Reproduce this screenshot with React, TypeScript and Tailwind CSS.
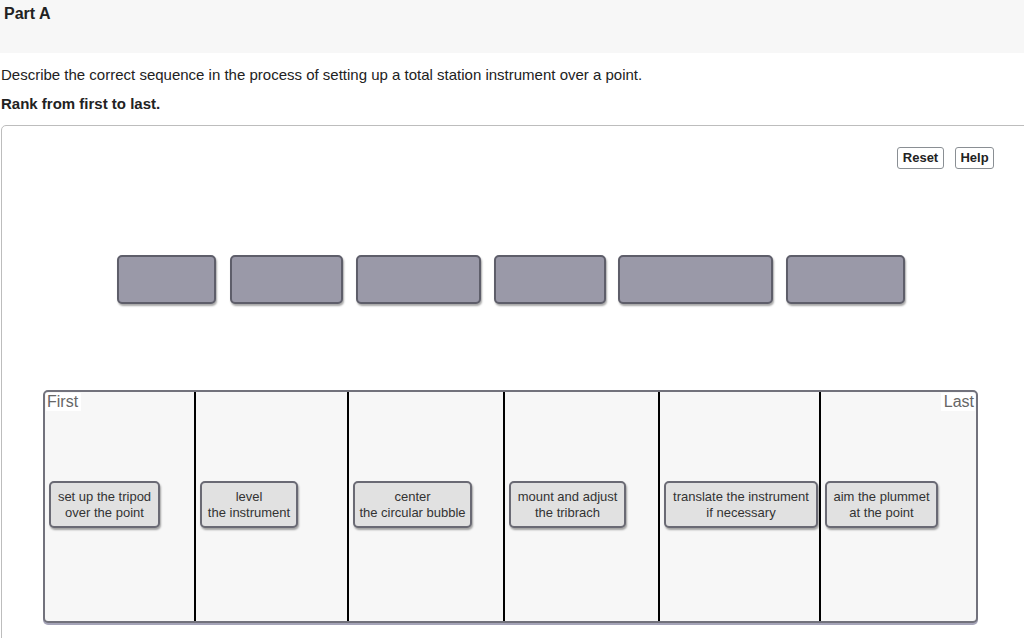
import React from 'react';

const tiles = [99, 113, 125, 112, 155, 119];

const columns = [
  { width: 149, card: 111, lines: ['set up the tripod', 'over the point'] },
  { width: 153, card: 98, lines: ['level', 'the instrument'] },
  { width: 156, card: 119, lines: ['center', 'the circular bubble'] },
  { width: 155, card: 117, lines: ['mount and adjust', 'the tribrach'] },
  { width: 161, card: 154, lines: ['translate the instrument', 'if necessary'] },
  { width: 157, card: 113, lines: ['aim the plummet', 'at the point'] },
];

export default function App() {
  return (
    <div
      className="w-[1024px] h-[638px] overflow-hidden bg-white text-[#222]"
      style={{ fontFamily: '"Liberation Sans", Arial, Helvetica, sans-serif' }}
    >
      {/* Header */}
      <div className="h-[53px] bg-[#f7f7f7] pl-[4px] pt-[5px]">
        <h2 className="text-[16px] leading-[18px] font-bold">Part A</h2>
      </div>

      <p className="mt-[13px] pl-[1px] text-[15px] leading-[18px]">
        Describe the correct sequence in the process of setting up a total station instrument over a point.
      </p>
      <p className="mt-[11px] pl-[1px] text-[15px] leading-[18px] font-bold">Rank from first to last.</p>

      {/* Ranking box */}
      <div className="mt-[12px] ml-[1px] w-[1060px] h-[600px] border border-[#bdbdbd] rounded-tl-[5px]">
        <div className="flex justify-end gap-[11px] pt-[21px] pr-[66px]">
          <button className="h-[22px] w-[47px] bg-white border border-[#8a8f94] rounded-[3px] text-[13px] font-bold">
            Reset
          </button>
          <button className="h-[22px] w-[39px] bg-white border border-[#8a8f94] rounded-[3px] text-[13px] font-bold">
            Help
          </button>
        </div>

        {/* Empty slots */}
        <div className="flex mt-[86px] ml-[115px]">
          {tiles.map((w, i) => (
            <div
              key={i}
              className={`h-[49px] bg-[#9a99a8] border-2 border-[#5e5e6a] rounded-[5px] shadow-[1px_2px_2px_rgba(0,0,0,0.35)] ${i === 0 ? '' : i === 4 ? 'ml-[12px]' : i === 1 ? 'ml-[14px]' : 'ml-[13px]'}`}
              style={{ width: w }}
            />
          ))}
        </div>

        {/* Ranking rows */}
        <div className="relative flex mt-[86px] ml-[41px] w-[935px] h-[233px] bg-[#f7f7f7] border-2 border-[#72727c] rounded-[5px] shadow-[0_2px_0_#a5a4b8]">
          <span className="absolute left-[1px] top-[1px] bg-white pr-[3px] pl-[1px] text-[16px] leading-[18px] text-[#666]">
            First
          </span>
          <span className="absolute right-[1px] top-[1px] bg-white pl-[3px] pr-[1px] text-[16px] leading-[18px] text-[#666]">
            Last
          </span>
          {columns.map((c, i) => (
            <div
              key={i}
              className={`h-full pt-[89px] pl-[4px] ${i > 0 ? 'border-l-2 border-black' : ''}`}
              style={{ width: c.width }}
            >
              <div
                className="h-[47px] bg-[#e1e1e1] border-2 border-[#6a6a74] rounded-[5px] shadow-[1px_2px_2px_rgba(0,0,0,0.35)] flex flex-col items-center justify-center text-[13px] leading-[16px] text-[#333]"
                style={{ width: c.card }}
              >
                {c.lines.map((l) => (
                  <span key={l} className="whitespace-nowrap">{l}</span>
                ))}
              </div>
            </div>
          ))}
        </div>
      </div>
    </div>
  );
}
